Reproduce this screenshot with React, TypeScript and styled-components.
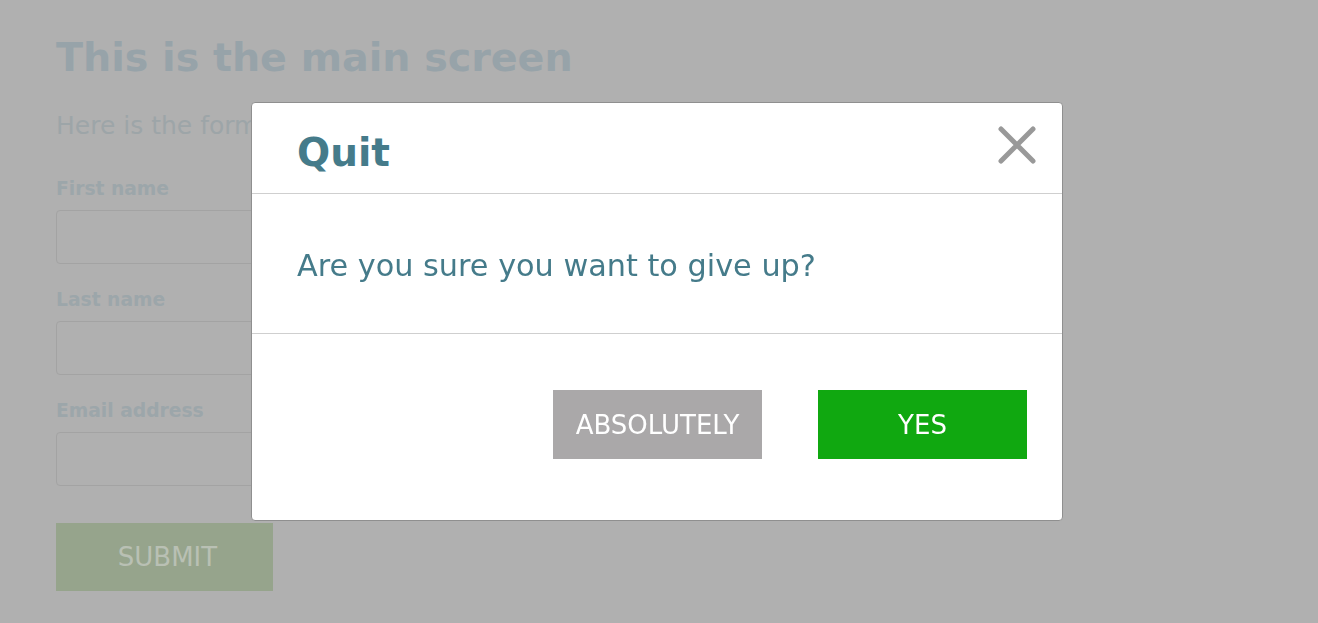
import React from "react";
import styled, { createGlobalStyle } from "styled-components";

const Global = createGlobalStyle`
  html, body { margin: 0; padding: 0; }
  body {
    background: #b0b0b0;
    font-family: "DejaVu Sans", Verdana, sans-serif;
    width: 1318px;
    height: 623px;
    overflow: hidden;
  }
  * { box-sizing: border-box; }
`;

const Page = styled.main`
  display: flex;
  flex-direction: column;
  padding: 29px 56px 0;
`;

const Heading = styled.h1`
  margin: 0;
  font-size: 39.6px;
  line-height: 56px;
  font-weight: bold;
  color: #97a3a9;
`;

const Intro = styled.p`
  margin: 25px 0 0;
  font-size: 25px;
  line-height: 32px;
  color: #9da5a8;
`;

const Form = styled.form`
  display: flex;
  flex-direction: column;
  gap: 24px;
  margin-top: 35px;
`;

const Field = styled.div`
  display: flex;
  flex-direction: column;
  gap: 9px;
`;

const Label = styled.label`
  font-size: 18.7px;
  line-height: 24px;
  font-weight: bold;
  color: #9ca6aa;
`;

const Input = styled.div`
  width: 420px;
  height: 54px;
  border: 1px solid #a3a3a3;
  border-radius: 4px;
`;

const Submit = styled.button`
  margin-top: 13px;
  width: 217px;
  height: 68px;
  border: none;
  padding: 0 0 0 6px;
  background: #96a48c;
  color: #b9c0b4;
  font-family: inherit;
  font-size: 26px;
`;

const Overlay = styled.div`
  position: fixed;
  inset: 0;
  display: flex;
  align-items: center;
  justify-content: center;
`;

const Dialog = styled.section`
  width: 812px;
  height: 419px;
  background: #fff;
  border: 1px solid #8f8f8f;
  border-radius: 4px;
  display: flex;
  flex-direction: column;
  margin-left: -4px;
`;

const Header = styled.header`
  height: 91px;
  display: flex;
  align-items: center;
  justify-content: space-between;
  padding: 0 26px 0 45px;
  border-bottom: 1px solid #cfcfcf;
`;

const Title = styled.h2`
  margin: 8px 0 0;
  font-size: 39px;
  font-weight: bold;
  color: #457b8a;
`;

const CloseButton = styled.button`
  border: none;
  background: none;
  padding: 0;
  width: 40px;
  height: 40px;
  display: flex;
  align-items: center;
  justify-content: center;
  margin-top: -6px;
  margin-right: -1px;
`;

const Body = styled.div`
  height: 140px;
  display: flex;
  align-items: center;
  padding: 4px 45px 0;
  border-bottom: 1px solid #cfcfcf;
`;

const Message = styled.p`
  margin: 0;
  font-size: 30.3px;
  color: #457b8a;
`;

const Footer = styled.footer`
  flex: 1;
  display: flex;
  justify-content: flex-end;
  align-items: flex-start;
  gap: 56px;
  padding: 56px 35px 0 0;
`;

const ActionButton = styled.button<{ $tone: "neutral" | "go" }>`
  width: 209px;
  height: 69px;
  border: none;
  background: ${(p) => (p.$tone === "go" ? "#10a810" : "#aaa8a9")};
  color: #fff;
  font-family: "DejaVu Sans", Verdana, sans-serif;
  font-size: 26px;
`;

const fields = ["First name", "Last name", "Email address"];

export default function App() {
  return (
    <>
      <Global />
      <Page>
        <Heading>This is the main screen</Heading>
        <Intro>Here is the form you need to fill in.</Intro>
        <Form>
          {fields.map((f) => (
            <Field key={f}>
              <Label>{f}</Label>
              <Input />
            </Field>
          ))}
          <div>
            <Submit type="button">SUBMIT</Submit>
          </div>
        </Form>
      </Page>
      <Overlay>
        <Dialog role="dialog">
          <Header>
            <Title>Quit</Title>
            <CloseButton aria-label="Close">
              <svg width="38" height="38" viewBox="0 0 38 38">
                <path
                  d="M3 3 L35 35 M35 3 L3 35"
                  stroke="#999"
                  strokeWidth="5"
                  strokeLinecap="round"
                />
              </svg>
            </CloseButton>
          </Header>
          <Body>
            <Message>Are you sure you want to give up?</Message>
          </Body>
          <Footer>
            <ActionButton $tone="neutral">ABSOLUTELY</ActionButton>
            <ActionButton $tone="go">YES</ActionButton>
          </Footer>
        </Dialog>
      </Overlay>
    </>
  );
}
